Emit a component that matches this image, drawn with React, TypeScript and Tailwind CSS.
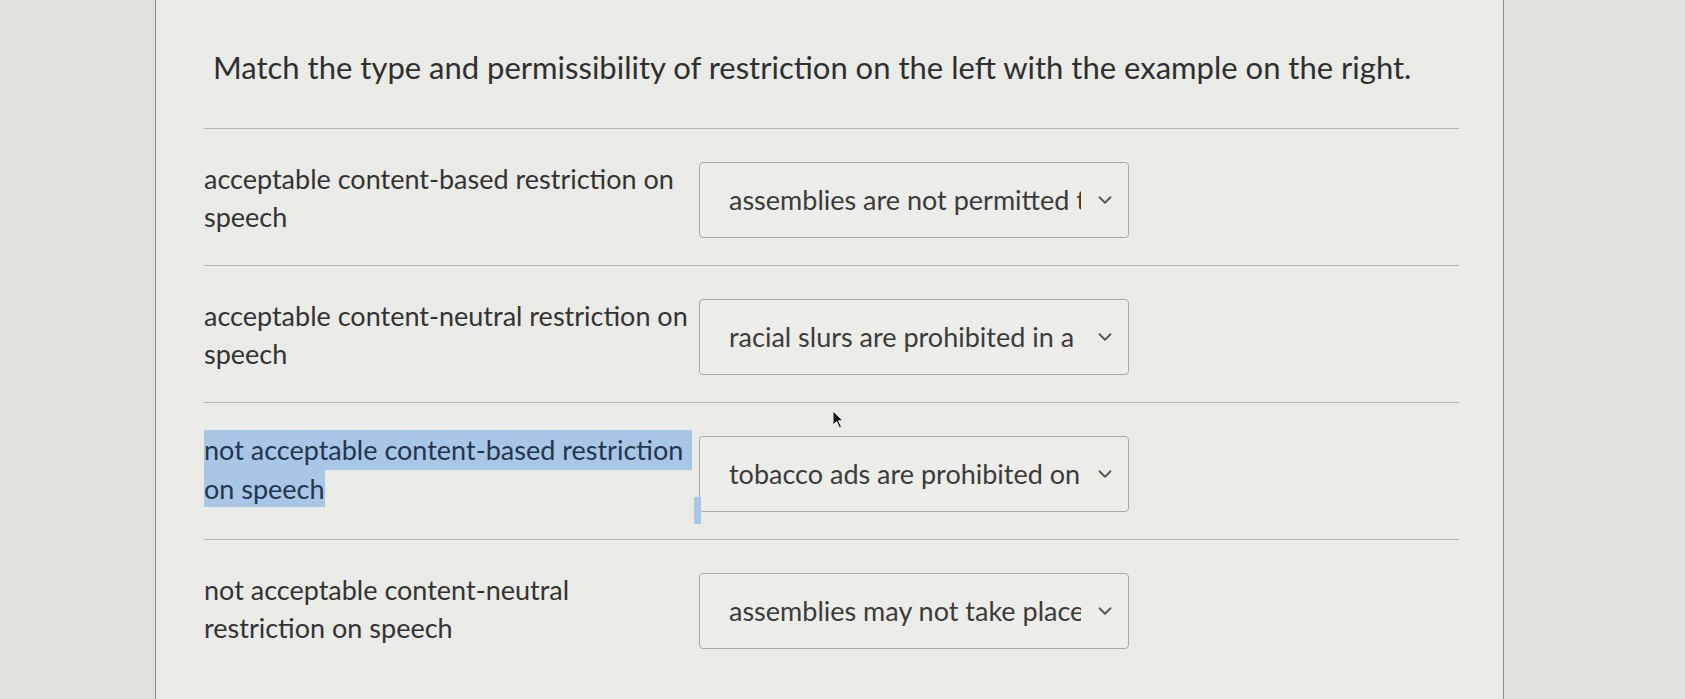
import { ChevronDown } from 'lucide-react';

const rows = [
  {
    lines: ['acceptable content-based restriction on', 'speech'],
    choice: 'assemblies are not permitted t',
  },
  {
    lines: ['acceptable content-neutral restriction on', 'speech'],
    choice: 'racial slurs are prohibited in a',
  },
  {
    lines: ['not acceptable content-based restriction', 'on speech'],
    choice: 'tobacco ads are prohibited on',
    selected: true,
  },
  {
    lines: ['not acceptable content-neutral', 'restriction on speech'],
    choice: 'assemblies may not take place',
  },
];

function Select({ value }: { value: string }) {
  return (
    <div className="w-[430px] h-[76px] shrink-0 rounded-[4px] border border-[#a9a9a6] bg-[#ecece9] flex items-center pl-[29px] pr-[12px]">
      <span className="w-[352px] overflow-hidden whitespace-nowrap text-[27px] text-[#3b3b3b]">{value}</span>
      <ChevronDown className="ml-auto w-[22px] h-[22px] text-[#555]" strokeWidth={2} />
    </div>
  );
}

export default function App() {
  return (
    <div className="w-[1685px] h-[699px] overflow-hidden bg-[#e0e0dd] flex font-['Lato','Noto_Sans',sans-serif]">
      <div className="w-[155px] shrink-0" />
      <div className="w-[1349px] shrink-0 border-x border-[#8d8d8b] bg-[#eaeae7] pl-[48px] pr-[44px]">
        <h1 className="pt-[47px] pl-[9px] text-[31px] leading-[40px] text-[#2f2f2f] font-normal whitespace-nowrap">
          Match the type and permissibility of restriction on the left with the example on the right.
        </h1>
        <div className="mt-[41px] border-t border-[#b4b4b1]" />
        {rows.map((r, i) => (
          <div key={i}>
            <div className="relative flex pt-[33px] pb-[27px] text-[27px] leading-[38px] text-[#333]">
              <div className="w-[495px] shrink-0 -mt-[2px] whitespace-nowrap">
                {r.selected ? (
                  <div className="text-[#24364e]">
                    <div className="bg-[#a8c6e6] w-[488px] h-[40px] leading-[40px] -mt-[4px]">{r.lines[0]}</div>
                    <div className="bg-[#a8c6e6] inline-block h-[37px] leading-[37px]">{r.lines[1]}</div>
                  </div>
                ) : (
                  <p>
                    {r.lines[0]}
                    <br />
                    {r.lines[1]}
                  </p>
                )}
              </div>
              <Select value={r.choice} />
              {r.selected && (
                <>
                  <div className="absolute left-[490px] top-[94px] w-[7px] h-[27px] bg-[#a8c6e6]" />
                  <svg className="absolute left-[628px] top-[7px]" width="14" height="20" viewBox="0 0 14 20">
                    <path d="M1 1 L1 15 L4.5 11.5 L7.5 18 L9.5 17 L6.5 10.8 L11 10.8 Z" fill="#111" stroke="#eee" strokeWidth="1" />
                  </svg>
                </>
              )}
            </div>
            {i < rows.length - 1 && <div className="border-t border-[#b4b4b1]" />}
          </div>
        ))}
      </div>
    </div>
  );
}
